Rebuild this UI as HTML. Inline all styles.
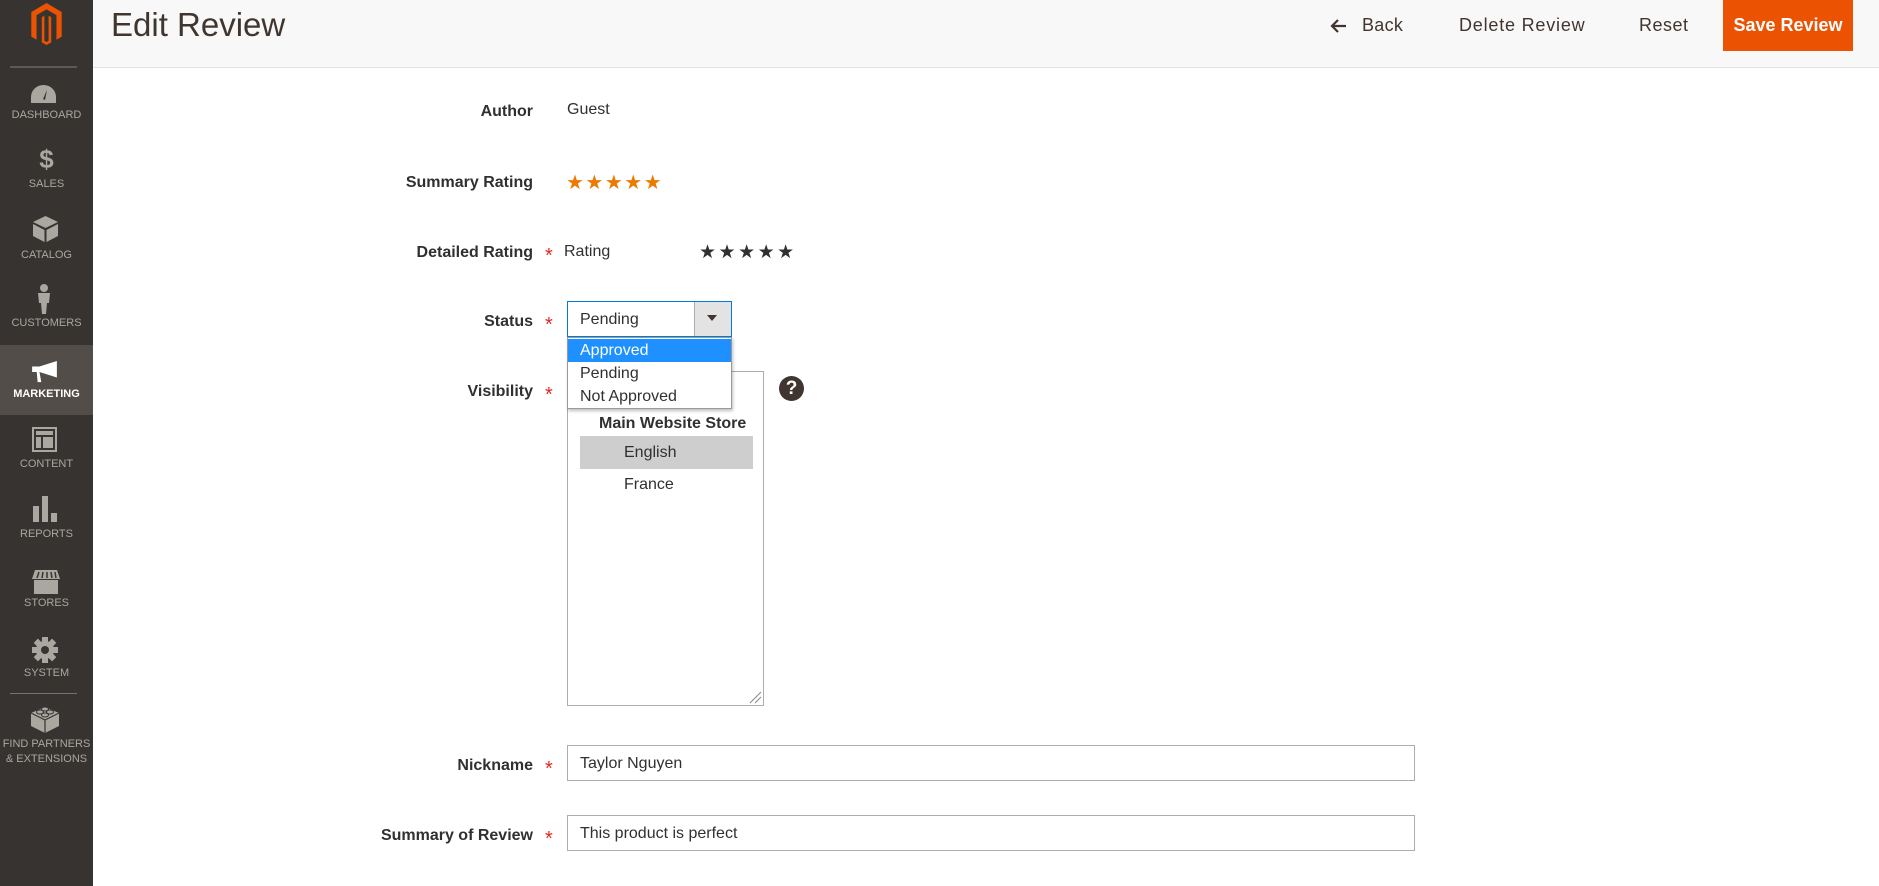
<!DOCTYPE html>
<html><head><meta charset="utf-8"><style>
*{box-sizing:border-box;margin:0;padding:0}
body{width:1879px;height:886px;position:relative;overflow:hidden;background:#fff;font-family:"Liberation Sans",sans-serif;color:#303030}
.sb{position:absolute;left:0;top:0;width:93px;height:886px;background:#373330}
.it{position:absolute;left:0;width:93px;text-align:center;font-size:11px;color:#aaa6a0}
.hdr{position:absolute;left:93px;top:0;width:1786px;height:68px;background:#f8f8f8;border-bottom:1px solid #e3e3e3}
.a{position:absolute;white-space:nowrap}
.lbl{position:absolute;right:1346px;font-size:16px;font-weight:bold;color:#303030;white-space:nowrap;transform:translateY(-50%)}
.req{position:absolute;left:545px;color:#e22626;font-size:20px;transform:translateY(-35%)}
.inp{position:absolute;left:567px;width:848px;height:36px;border:1px solid #adadad;font-size:16px;padding:0 12px;line-height:36px}
</style></head><body>
<div class="sb">
  <svg class="a" style="left:30px;top:2px" width="33" height="44" viewBox="0 0 31 42"><path d="M15.5 1 L30 9.5 V33 L25 36 V12.5 L15.5 7 L6 12.5 V36 L1 33 V9.5 Z" fill="#eb5202"/><path d="M15.5 41 L11 38.5 V14.5 L15.5 12 L13.5 13 V37 L15.5 38.2 L17.5 37 V13 L20 14.5 V38.5 Z" fill="#eb5202"/></svg>
  <div class="a" style="left:10px;top:66px;width:67px;height:2px;background:#5e5955"></div>
  <svg class="a" style="left:31px;top:85px" width="25" height="18" viewBox="0 0 25 18"><path d="M0 18 V12 A12.5 12 0 0 1 25 12 V18 Z" fill="#aaa6a0"/><path d="M12 14 L16 5 L14 15Z" fill="#373330"/></svg>
  <div class="it" style="top:109px">DASHBOARD</div>
  <div class="it" style="top:144px;font-size:26px;font-weight:bold">$</div>
  <div class="it" style="top:178px">SALES</div>
  <svg class="a" style="left:33px;top:216px" width="25" height="26" viewBox="0 0 25 26"><path d="M12.5 0 L25 6 L12.5 12 L0 6Z M0 8 L11.5 14 V26 L0 20Z M25 8 L13.5 14 V26 L25 20Z" fill="#aaa6a0"/></svg>
  <div class="it" style="top:249px">CATALOG</div>
  <svg class="a" style="left:36px;top:284px" width="16" height="30" viewBox="0 0 16 30"><circle cx="8" cy="4" r="4" fill="#aaa6a0"/><path d="M2 9 H14 L13 19 H11 L10 30 H6 L5 19 H3Z" fill="#aaa6a0"/></svg>
  <div class="it" style="top:317px">CUSTOMERS</div>
  <div class="a" style="left:0;top:345px;width:93px;height:70px;background:#524d49"></div>
  <svg class="a" style="left:32px;top:361px" width="25" height="22" viewBox="0 0 27 24"><path d="M0 6 H8 L27 0 V18 L8 12 H0Z M5 12 L8 12 L10 23 L6 23Z" fill="#fff"/></svg>
  <div class="it" style="top:388px;color:#fff;font-weight:bold">MARKETING</div>
  <svg class="a" style="left:32px;top:427px" width="25" height="25" viewBox="0 0 25 25"><rect x="1" y="1" width="23" height="23" fill="none" stroke="#aaa6a0" stroke-width="2"/><rect x="4" y="4" width="17" height="4" fill="#aaa6a0"/><rect x="4" y="10" width="5" height="11" fill="#aaa6a0"/><rect x="11" y="10" width="10" height="11" fill="#aaa6a0"/></svg>
  <div class="it" style="top:458px">CONTENT</div>
  <svg class="a" style="left:32px;top:496px" width="26" height="26" viewBox="0 0 26 26"><rect x="1" y="10" width="6" height="16" fill="#aaa6a0"/><rect x="10" y="0" width="6" height="26" fill="#aaa6a0"/><rect x="19" y="17" width="6" height="9" fill="#aaa6a0"/></svg>
  <div class="it" style="top:528px">REPORTS</div>
  <svg class="a" style="left:32px;top:570px" width="28" height="24" viewBox="0 0 28 24"><path d="M3 0 H25 L28 9 H0Z" fill="#aaa6a0"/><path d="M7 2 L5 8 M11 2 L10 8 M15 2 L15 8 M19 2 L20 8 M23 2 L24 8" stroke="#373330" stroke-width="1.5"/><rect x="2" y="10" width="24" height="14" fill="#aaa6a0"/></svg>
  <div class="it" style="top:597px">STORES</div>
  <svg class="a" style="left:32px;top:637px" width="26" height="26" viewBox="0 0 26 26"><g fill="#aaa6a0"><circle cx="13" cy="13" r="9"/><rect x="10" y="0" width="6" height="26"/><rect x="0" y="10" width="26" height="6"/><rect x="10" y="0" width="6" height="26" transform="rotate(45 13 13)"/><rect x="10" y="0" width="6" height="26" transform="rotate(-45 13 13)"/></g><circle cx="13" cy="13" r="4" fill="#373330"/></svg>
  <div class="it" style="top:667px">SYSTEM</div>
  <div class="a" style="left:10px;top:693px;width:67px;height:1px;background:#7a7470"></div>
  <svg class="a" style="left:31px;top:703px" width="28" height="30" viewBox="0 0 28 30"><path d="M14 4 L28 10 V23 L14 30 L0 23 V10Z" fill="#aaa6a0"/><path d="M0 10 L14 17 L28 10 M14 17 V30" stroke="#373330" stroke-width="1.2" fill="none"/><g fill="#aaa6a0" stroke="#373330" stroke-width="1"><ellipse cx="9" cy="9" rx="3.5" ry="2"/><ellipse cx="19" cy="9" rx="3.5" ry="2"/><ellipse cx="14" cy="6" rx="3.5" ry="2"/><ellipse cx="14" cy="12" rx="3.5" ry="2"/></g></svg>
  <div class="it" style="top:737px;line-height:15px">FIND PARTNERS<br>&amp; EXTENSIONS</div>
</div>
<div class="hdr"></div>
<div class="a" style="left:111px;top:6px;font-size:33px;color:#41362f">Edit Review</div>
<svg class="a" style="left:1330px;top:18px" width="18" height="16" viewBox="0 0 18 16"><path d="M16 8 H3 M8 2 L2 8 L8 14" stroke="#41362f" stroke-width="2.2" fill="none"/></svg>
<div class="a" style="left:1362px;top:15px;font-size:18px;color:#41362f;letter-spacing:.3px">Back</div>
<div class="a" style="left:1459px;top:15px;font-size:18px;color:#41362f;letter-spacing:.8px">Delete Review</div>
<div class="a" style="left:1639px;top:15px;font-size:18px;color:#41362f;letter-spacing:.5px">Reset</div>
<div class="a" style="left:1723px;top:0;width:130px;height:51px;background:#eb5202"></div>
<div class="a" style="left:1723px;top:15px;width:130px;text-align:center;font-size:18px;color:#fff;font-weight:bold">Save Review</div>

<div class="lbl" style="top:112px">Author</div>
<div class="a" style="left:567px;top:101px;font-size:16px">Guest</div>
<div class="lbl" style="top:183px">Summary Rating</div>
<div class="a" style="left:566px;top:170px;font-size:20px;color:#eb7a00;letter-spacing:1.5px">★★★★★</div>
<div class="lbl" style="top:253px">Detailed Rating</div>
<div class="req" style="top:253px">*</div>
<div class="a" style="left:564px;top:243px;font-size:16px">Rating</div>
<div class="a" style="left:699px;top:241px;font-size:19px;color:#303030;letter-spacing:2.5px">★★★★★</div>
<div class="lbl" style="top:322px">Status</div>
<div class="req" style="top:322px">*</div>
<div class="lbl" style="top:392px">Visibility</div>
<div class="req" style="top:392px">*</div>

<div class="a" style="left:567px;top:371px;width:197px;height:335px;border:1px solid #adadad"></div>
<div class="a" style="left:599px;top:415px;font-size:16px;font-weight:bold">Main Website Store</div>
<div class="a" style="left:580px;top:436px;width:173px;height:33px;background:#cecece"></div>
<div class="a" style="left:624px;top:444px;font-size:16px">English</div>
<div class="a" style="left:624px;top:476px;font-size:16px">France</div>
<svg class="a" style="left:748px;top:690px" width="14" height="14" viewBox="0 0 14 14"><path d="M13 2 L2 13 M13 7 L7 13" stroke="#888" stroke-width="1"/></svg>
<div class="a" style="left:779px;top:376px;width:25px;height:25px;border-radius:50%;background:#41362f;color:#fff;font-weight:bold;font-size:19px;text-align:center;line-height:25px">?</div>

<div class="a" style="left:567px;top:301px;width:165px;height:36px;border:1px solid #007bdb;background:#fff"></div>
<div class="a" style="left:694px;top:302px;width:37px;height:34px;background:#e3e3e3;border-left:1px solid #adadad"></div>
<svg class="a" style="left:707px;top:315px" width="10" height="6"><path d="M0 0 H10 L5 6Z" fill="#41362f"/></svg>
<div class="a" style="left:580px;top:311px;font-size:16px">Pending</div>
<div class="a" style="left:567px;top:337px;width:165px;height:72px;background:#fff;border:1px solid #9a9a9a;box-shadow:1px 2px 3px rgba(0,0,0,.25)"></div>
<div class="a" style="left:568px;top:339px;width:163px;height:23px;background:#1e90ff"></div>
<div class="a" style="left:580px;top:342px;font-size:16px;color:#fff">Approved</div>
<div class="a" style="left:580px;top:365px;font-size:16px">Pending</div>
<div class="a" style="left:580px;top:388px;font-size:16px">Not Approved</div>

<div class="lbl" style="top:766px">Nickname</div>
<div class="req" style="top:766px">*</div>
<div class="inp" style="top:745px">Taylor Nguyen</div>
<div class="lbl" style="top:836px">Summary of Review</div>
<div class="req" style="top:836px">*</div>
<div class="inp" style="top:815px">This product is perfect</div>
</body></html>
